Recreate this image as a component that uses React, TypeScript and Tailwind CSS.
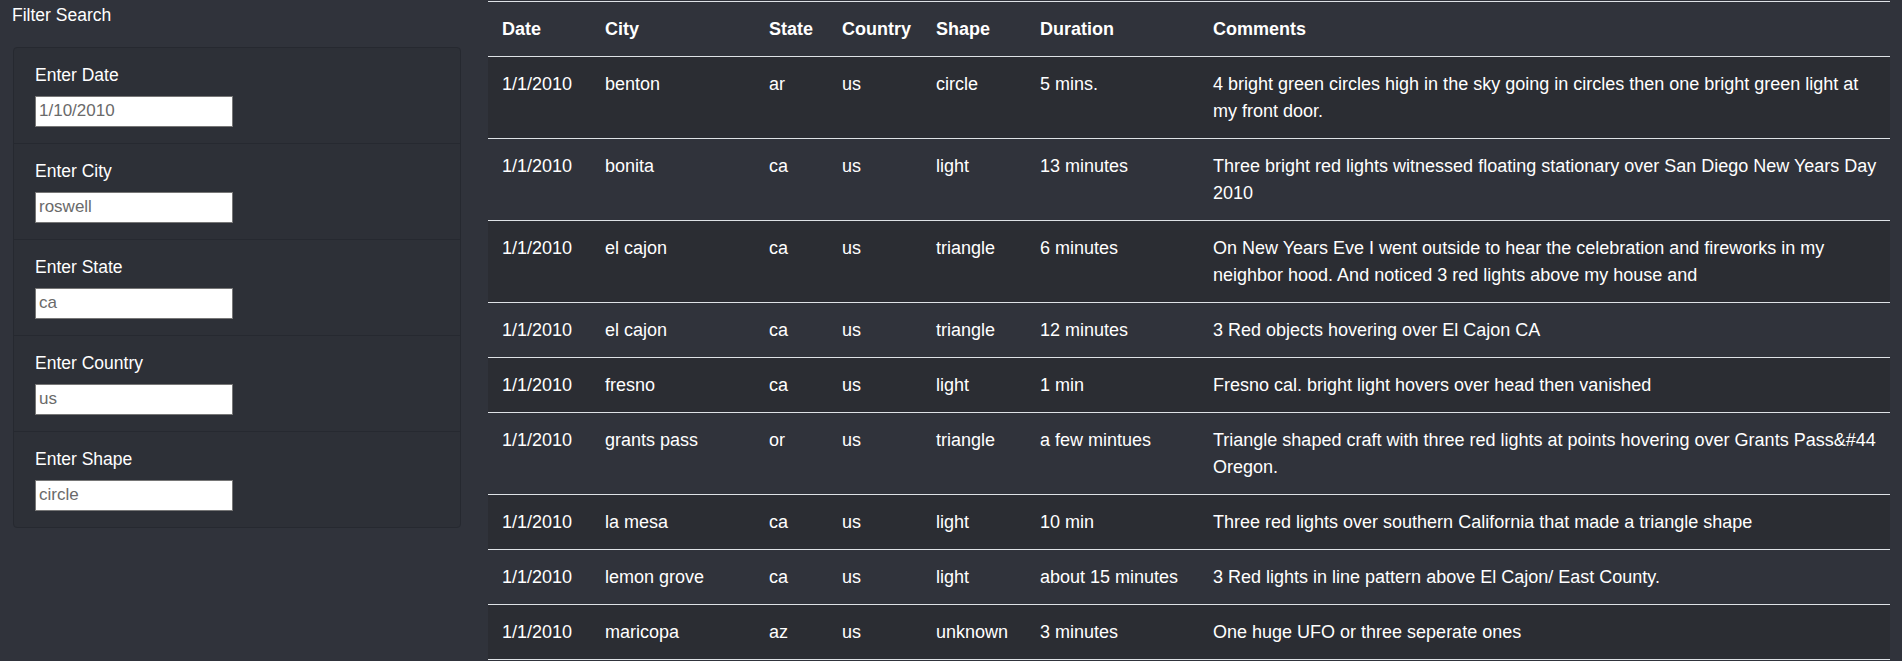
import React from 'react';

interface Sighting {
  date: string;
  city: string;
  state: string;
  country: string;
  shape: string;
  duration: string;
  comments: string;
}

const sightings: Sighting[] = [
  {
    date: '1/1/2010',
    city: 'benton',
    state: 'ar',
    country: 'us',
    shape: 'circle',
    duration: '5 mins.',
    comments: '4 bright green circles high in the sky going in circles then one bright green light at my front door.'
  },
  {
    date: '1/1/2010',
    city: 'bonita',
    state: 'ca',
    country: 'us',
    shape: 'light',
    duration: '13 minutes',
    comments: 'Three bright red lights witnessed floating stationary over San Diego New Years Day 2010'
  },
  {
    date: '1/1/2010',
    city: 'el cajon',
    state: 'ca',
    country: 'us',
    shape: 'triangle',
    duration: '6 minutes',
    comments: 'On New Years Eve I went outside to hear the celebration and fireworks in my neighbor hood. And noticed 3 red lights above my house and'
  },
  {
    date: '1/1/2010',
    city: 'el cajon',
    state: 'ca',
    country: 'us',
    shape: 'triangle',
    duration: '12 minutes',
    comments: '3 Red objects hovering over El Cajon CA'
  },
  {
    date: '1/1/2010',
    city: 'fresno',
    state: 'ca',
    country: 'us',
    shape: 'light',
    duration: '1 min',
    comments: 'Fresno cal. bright light hovers over head then vanished'
  },
  {
    date: '1/1/2010',
    city: 'grants pass',
    state: 'or',
    country: 'us',
    shape: 'triangle',
    duration: 'a few mintues',
    comments: 'Triangle shaped craft with three red lights at points hovering over Grants Pass&#44 Oregon.'
  },
  {
    date: '1/1/2010',
    city: 'la mesa',
    state: 'ca',
    country: 'us',
    shape: 'light',
    duration: '10 min',
    comments: 'Three red lights over southern California that made a triangle shape'
  },
  {
    date: '1/1/2010',
    city: 'lemon grove',
    state: 'ca',
    country: 'us',
    shape: 'light',
    duration: 'about 15 minutes',
    comments: '3 Red lights in line pattern above El Cajon/ East County.'
  },
  {
    date: '1/1/2010',
    city: 'maricopa',
    state: 'az',
    country: 'us',
    shape: 'unknown',
    duration: '3 minutes',
    comments: 'One huge UFO or three seperate ones'
  }
];

const filters = [
  { label: 'Enter Date', placeholder: '1/10/2010' },
  { label: 'Enter City', placeholder: 'roswell' },
  { label: 'Enter State', placeholder: 'ca' },
  { label: 'Enter Country', placeholder: 'us' },
  { label: 'Enter Shape', placeholder: 'circle' }
];

const columns = ['Date', 'City', 'State', 'Country', 'Shape', 'Duration', 'Comments'];

export default function App() {
  return (
    <div
      className="min-h-screen bg-[#30333b] text-white flex"
      style={{ fontFamily: '"Liberation Sans", Arial, sans-serif' }}
    >
      {/* filter column */}
      <div className="w-[461px] shrink-0 pl-[13px]">
        <p className="-ml-px pt-[3px] text-[17.5px] leading-[25.5px]">Filter Search</p>
        <ul className="mt-[18px] bg-[#2d3037] border border-[#262930] rounded-[4px]">
          {filters.map((f, i) => (
            <li
              key={f.label}
              className={
                'px-[21px] pt-[14px] pb-[16px] ' + (i > 0 ? 'border-t border-[#262930]' : '')
              }
            >
              <label className="block text-[17.5px] leading-[26px] mb-[8px]">{f.label}</label>
              <input
                type="text"
                placeholder={f.placeholder}
                className="block w-[198px] h-[31px] bg-white border border-[#767676] pl-[3px] text-[17px] text-[#333] placeholder:text-[#6a6a6a] outline-none"
              />
            </li>
          ))}
        </ul>
      </div>

      {/* results table */}
      <div className="ml-[27px] mr-[12px] flex-1 pt-px">
        <table className="w-full table-fixed border-collapse text-[18px] leading-[27px]">
          <colgroup>
            <col className="w-[103px]" />
            <col className="w-[164px]" />
            <col className="w-[73px]" />
            <col className="w-[94px]" />
            <col className="w-[104px]" />
            <col className="w-[173px]" />
            <col />
          </colgroup>
          <thead>
            <tr className="border-t border-[#dee2e6]">
              {columns.map(c => (
                <th key={c} className="text-left font-bold px-[14px] pt-[14px] pb-[13px]">
                  {c}
                </th>
              ))}
            </tr>
          </thead>
          <tbody>
            {sightings.map((s, i) => (
              <tr
                key={i}
                className={
                  'border-t border-[#dee2e6] align-top ' +
                  (i % 2 === 0 ? 'bg-[#2b2d33]' : '') +
                  (i === sightings.length - 1 ? ' border-b' : '')
                }
              >
                <td className="px-[14px] pt-[14px] pb-[13px]">{s.date}</td>
                <td className="px-[14px] pt-[14px] pb-[13px]">{s.city}</td>
                <td className="px-[14px] pt-[14px] pb-[13px]">{s.state}</td>
                <td className="px-[14px] pt-[14px] pb-[13px]">{s.country}</td>
                <td className="px-[14px] pt-[14px] pb-[13px]">{s.shape}</td>
                <td className="px-[14px] pt-[14px] pb-[13px]">{s.duration}</td>
                <td className="pl-[14px] pr-[8px] pt-[14px] pb-[13px]">{s.comments}</td>
              </tr>
            ))}
          </tbody>
        </table>
      </div>
    </div>
  );
}
